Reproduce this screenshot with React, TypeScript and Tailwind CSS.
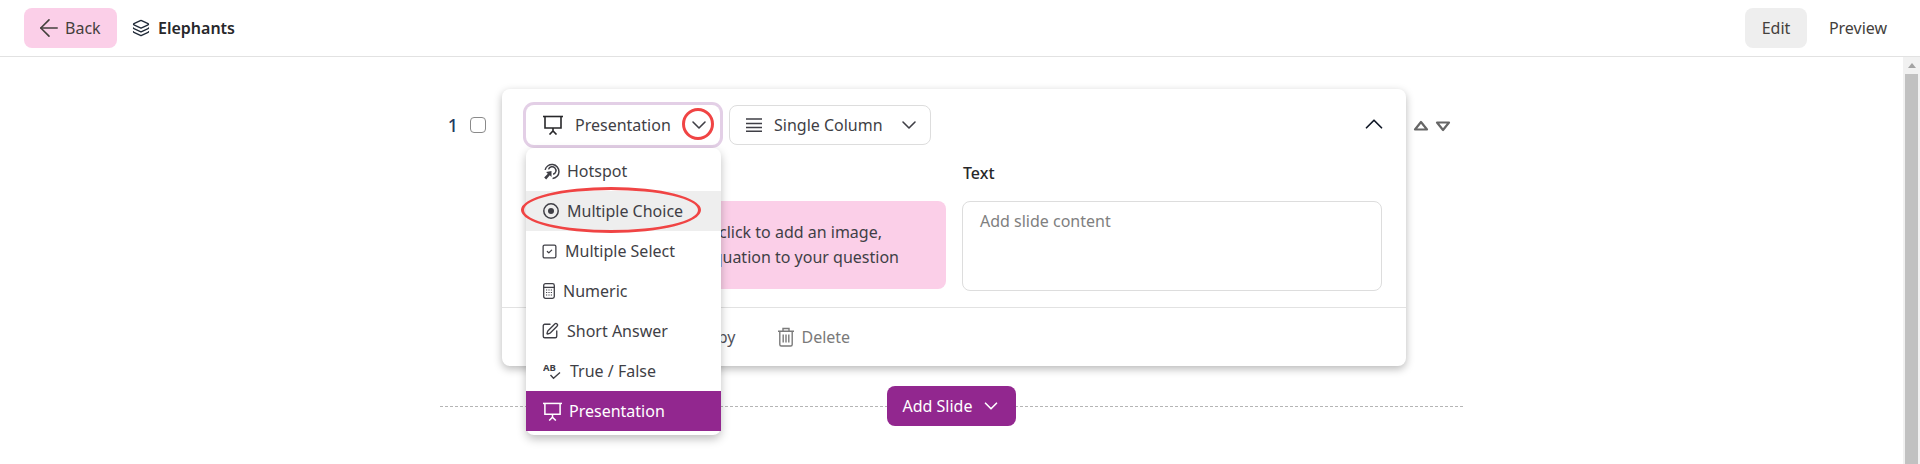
import React from "react";
import { ArrowLeft, Layers, ChevronDown, ChevronUp, SquareCheck, SquarePen } from "lucide-react";

const Pres = ({ className = "" }: { className?: string }) => (
  <svg viewBox="0 0 20 20" width="20" height="20" fill="none" stroke="currentColor" strokeWidth="1.6" className={className}>
    <path d="M0 1.5h20" />
    <path d="M2 1.5v11.5h16V1.5" />
    <path d="M10 13v3M6.5 19.5l3.5-3.5 3.5 3.5" />
  </svg>
);
const Hotspot = () => (
  <svg viewBox="0 0 16 16" width="17" height="17" fill="none" stroke="currentColor" strokeWidth="1.4">
    <path d="M2 6.5A6.6 6.6 0 1 1 9 14.6" />
    <path d="M5.2 6a3.6 3.6 0 1 1 4.3 4.6" />
    <path d="M8 7.6v5.6l-1.6-1.6L3 15.6 1.1 13.7l3.4-3.5-1.6-1.8z" fill="currentColor" stroke="none" />
  </svg>
);
const Radio = () => (
  <svg viewBox="0 0 16 16" width="16" height="16" fill="none" stroke="currentColor" strokeWidth="1.5">
    <circle cx="8" cy="8" r="7.2" />
    <circle cx="8" cy="8" r="3" fill="currentColor" stroke="none" />
  </svg>
);
const Calc = () => (
  <svg viewBox="0 0 12 16" width="12" height="16" fill="none" stroke="currentColor" strokeWidth="1.3">
    <rect x="0.7" y="0.7" width="10.6" height="14.6" rx="1.8" />
    <path d="M0.7 4.4h10.6" />
    <path d="M3 7h6M3 9.5h6M3 12h6" strokeDasharray="1.2 1.2" strokeWidth="1.2" />
  </svg>
);
const TrueFalse = () => (
  <svg viewBox="0 0 18 18" width="18" height="18" fill="none" stroke="currentColor" strokeWidth="1.4">
    <text x="0" y="9" fontSize="9.5" fontWeight="700" fill="currentColor" stroke="none" fontFamily="'Noto Sans', sans-serif">AB</text>
    <path d="M7.5 13l3 3.2 6.5-5.7" />
  </svg>
);
const Lines = () => (
  <svg viewBox="0 0 16 14" width="16" height="14" fill="none" stroke="currentColor" strokeWidth="1.5">
    <path d="M0 1h16M0 5.4h16M0 9.4h16M0 13.2h16" />
  </svg>
);
const Trash = () => (
  <svg viewBox="0 0 18 20" width="18" height="20" fill="none" stroke="currentColor" strokeWidth="1.4">
    <path d="M1 4.2h16M6 4V1.5h6V4" />
    <path d="M2.8 4.2v13.3a1.5 1.5 0 0 0 1.5 1.5h9.4a1.5 1.5 0 0 0 1.5-1.5V4.2" />
    <path d="M6.2 7.5v8M9 7.5v8M11.8 7.5v8" />
  </svg>
);

const items = [
  { label: "Hotspot", icon: <Hotspot />, w: "w-[24px]" },
  { label: "Multiple Choice", icon: <Radio />, w: "w-[24px]" },
  { label: "Multiple Select", icon: <SquareCheck size={17} strokeWidth={1.8} className="-ml-[2px]" />, w: "w-[22px]" },
  { label: "Numeric", icon: <Calc />, w: "w-[20px]" },
  { label: "Short Answer", icon: <SquarePen size={18} strokeWidth={1.8} className="-ml-[2px]" />, w: "w-[24px]" },
  { label: "True / False", icon: <TrueFalse />, w: "w-[27px]" },
];

export default function App() {
  return (
    <div className="h-[464px] w-[1920px] overflow-hidden bg-white font-['Noto_Sans',sans-serif] text-[#3f3f46]">
      <header className="flex h-[57px] items-center justify-between border-b border-[#e2e2e2] pb-px pl-6 pr-[11px]">
        <div className="flex items-center">
          <button className="flex h-10 w-[93px] items-center gap-[2px] rounded-lg bg-[#fbcfe8] pl-[11px] text-[16px] text-[#44403c]">
            <ArrowLeft size={28} strokeWidth={1.4} />
            Back
          </button>
          <Layers size={18} strokeWidth={1.7} className="ml-[15px] text-[#1f2937]" />
          <span className="ml-2 text-[16px] font-semibold text-[#27272a]">Elephants</span>
        </div>
        <div className="flex items-center">
          <button className="h-10 w-[62px] rounded-lg bg-[#eeeeee] text-[16px] text-[#44403c]">Edit</button>
          <button className="h-10 w-[102px] text-[16px] text-[#44403c]">Preview</button>
        </div>
      </header>

      <div className="flex h-[407px]">
        <main className="relative flex-1">
          <div className="pl-[440px] pt-[32px]">
            <div className="flex items-start">
              <div className="flex w-[62px] items-center pt-[23px]">
                <span className="w-[30px] pr-[12px] text-right text-[18px] font-medium leading-[26px] text-[#1e3a5f]">1</span>
                <span className="block h-4 w-4 rounded-[4px] border border-[#8a8a8a] bg-white" />
              </div>
              <section className="relative w-[904px] rounded-lg bg-white shadow-[0_3px_8px_rgba(0,0,0,0.28)]">
                <div className="flex h-[112px] items-start px-6 pt-[16px]">
                  <div className="flex h-10 w-[194px] items-center rounded-lg bg-white pl-[17px] ring-[3px] ring-[#e3cfe6]">
                    <Pres className="text-[#27272a]" />
                    <span className="ml-[12px] text-[16px]">Presentation</span>
                    <ChevronDown size={24} strokeWidth={1.6} className="ml-[16px]" />
                  </div>
                  <div className="ml-[9px] flex h-10 w-[202px] items-center rounded-lg border border-[#dddddd] pl-4">
                    <Lines />
                    <span className="ml-[12px] text-[16px]">Single Column</span>
                    <ChevronDown size={24} strokeWidth={1.6} className="ml-[14px]" />
                  </div>
                  <ChevronUp size={30} strokeWidth={1.4} className="ml-auto mr-[-7px] mt-1 text-[#111827]" />
                </div>
                <div className="flex gap-4 px-6">
                  <div className="flex h-[88px] w-[420px] flex-col items-end justify-center rounded-lg bg-[#fbcfe8] pr-[47px] text-[16px] leading-[25px]">
                    <span className="mr-[17px]">Drag and drop or click to add an image,</span>
                    <span>video, audio or equation to your question</span>
                  </div>
                  <div className="relative h-[90px] w-[420px] rounded-lg border border-[#dddddd] px-[17px] py-[7px] text-[16px] text-[#808080]">
                    <span className="absolute -top-[41px] left-0 font-medium text-[#27272a]">Text</span>
                    Add slide content
                  </div>
                </div>
                <div className="mt-4 flex h-[59px] items-center border-t border-[#e2e2e2] pl-[196px] text-[16px] text-[#7a7a7a]">
                  <span className="text-[#52525b]">Copy</span>
                  <span className="ml-[42px]"><Trash /></span>
                  <span className="ml-[6px]">Delete</span>
                </div>
              </section>
              <div className="ml-[7px] flex gap-[6px] pt-[31px] text-[#666666]">
                <svg viewBox="0 0 16 12" width="16" height="12" fill="none" stroke="currentColor" strokeWidth="2.2"><path d="M8 2l6 7.5H2z" strokeLinejoin="round" /></svg>
                <svg viewBox="0 0 16 12" width="16" height="12" fill="none" stroke="currentColor" strokeWidth="2.2"><path d="M8 10L2 2.5h12z" strokeLinejoin="round" /></svg>
              </div>
            </div>
            <div className="relative mt-[20px] flex h-10 w-[1023px] items-center justify-center">
              <div className="absolute inset-x-0 top-1/2 border-t border-dashed border-[#b5b5b5]" />
              <button className="relative flex h-10 w-[129px] items-center justify-center gap-[8px] rounded-lg bg-[#92278f] pl-[2px] text-[16px] text-white">
                Add Slide
                <ChevronDown size={22} strokeWidth={1.8} />
              </button>
            </div>
          </div>

          <div className="absolute left-[526px] top-[91px] w-[195px] rounded-lg bg-white pb-1 pt-[3px] text-[16px] shadow-[0_4px_10px_rgba(0,0,0,0.25)]">
            {items.map((it) => (
              <div key={it.label} className={`flex h-10 items-center pl-[17px] ${it.label === "Multiple Choice" ? "bg-[#eeeeee]" : ""}`}>
                <span className={`flex shrink-0 items-center ${it.w}`}>{it.icon}</span>
                <span>{it.label}</span>
              </div>
            ))}
            <div className="flex h-10 items-center bg-[#92278f] pl-[17px] text-white">
              <span className="flex w-[26px] shrink-0 items-center"><Pres className="h-[19px] w-[19px]" /></span>
              <span>Presentation</span>
            </div>
          </div>

          <div className="absolute left-[682px] top-[51px] h-8 w-8 rounded-full border-[3px] border-[#f04444]" />
          <div className="absolute left-[521px] top-[130px] h-[46px] w-[180px] rounded-[50%] border-[3px] border-[#f04444]" />
        </main>

        <aside className="flex w-[17px] flex-col items-center bg-[#f1f1f1]">
          <div className="mt-[6px] h-0 w-0 border-x-[4px] border-b-[5px] border-x-transparent border-b-[#a3a3a3]" />
          <div className="mt-[6px] w-[13px] flex-1 bg-[#c1c1c1]" />
        </aside>
      </div>
    </div>
  );
}
